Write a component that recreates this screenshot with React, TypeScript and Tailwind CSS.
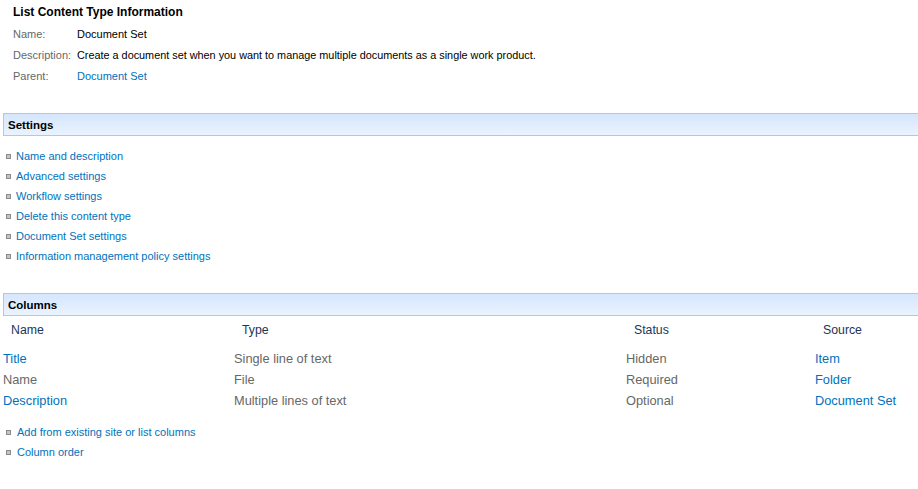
const LINK = "text-[#0072bc]";

function Bullet() {
  return <span className="inline-block h-[5px] w-[5px] shrink-0 border border-[#8a8a8a] bg-[#c4c4c4]" />;
}

function SectionBar({ title }: { title: string }) {
  return (
    <div className="ml-[3px] flex h-[23px] items-center border-y border-l border-[#a6caf6] bg-gradient-to-b from-[#d6e6fd] to-[#eaf3ff] pt-[2px] pl-[4px] text-[11.5px] font-bold text-black">
      {title}
    </div>
  );
}

function LinkRow({ label }: { label: string }) {
  return (
    <div className="flex h-[20px] items-center gap-[5px] pl-[6px]">
      <Bullet />
      <span className={LINK}>{label}</span>
    </div>
  );
}

const settings = [
  "Name and description",
  "Advanced settings",
  "Workflow settings",
  "Delete this content type",
  "Document Set settings",
  "Information management policy settings",
];

const columns = [
  { name: "Title", link: true, type: "Single line of text", status: "Hidden", source: "Item" },
  { name: "Name", link: false, type: "File", status: "Required", source: "Folder" },
  { name: "Description", link: true, type: "Multiple lines of text", status: "Optional", source: "Document Set" },
];

export default function App() {
  return (
    <div className="h-[489px] w-[918px] overflow-hidden bg-white pt-[5px] text-[11px] text-[#676767] [font-family:'Liberation_Sans',Arial,sans-serif]">
      <div className="h-[14px] pl-[13px] text-[12px] leading-[14px] font-bold text-black">List Content Type Information</div>
      <div className="mt-[5px] pl-[13px]">
        <div className="flex h-[21px] items-center">
          <span className="w-[64px]">Name:</span>
          <span className="text-black">Document Set</span>
        </div>
        <div className="flex h-[21px] items-center">
          <span className="w-[64px]">Description:</span>
          <span className="text-[10.85px] text-black">Create a document set when you want to manage multiple documents as a single work product.</span>
        </div>
        <div className="flex h-[21px] items-center">
          <span className="w-[64px]">Parent:</span>
          <span className={LINK}>Document Set</span>
        </div>
      </div>

      <div className="mt-[26px]">
        <SectionBar title="Settings" />
      </div>
      <div className="mt-[10px]">
        {settings.map((s) => (
          <LinkRow key={s} label={s} />
        ))}
      </div>

      <div className="mt-[27px]">
        <SectionBar title="Columns" />
      </div>
      <div className="mt-[4px] ml-[3px] grid h-[20px] grid-cols-[231px_392px_189px_1fr] items-center text-[12.3px] text-[#1c3557]">
        <span className="pl-[8px]">Name</span>
        <span className="pl-[8px]">Type</span>
        <span className="pl-[8px]">Status</span>
        <span className="pl-[8px]">Source</span>
      </div>
      <div className="mt-[8px] ml-[3px]">
        {columns.map((c) => (
          <div key={c.name} className="grid h-[21px] grid-cols-[231px_392px_189px_1fr] items-center text-[12.8px]">
            <span className={c.link ? LINK : ""}>{c.name}</span>
            <span>{c.type}</span>
            <span>{c.status}</span>
            <span className={LINK}>{c.source}</span>
          </div>
        ))}
      </div>

      <div className="mt-[11px]">
        <div className="flex h-[20px] items-center gap-[6px] pl-[6px]">
          <Bullet />
          <span className={LINK}>Add from existing site or list columns</span>
        </div>
        <div className="flex h-[20px] items-center gap-[6px] pl-[6px]">
          <Bullet />
          <span className={LINK}>Column order</span>
        </div>
      </div>
    </div>
  );
}
